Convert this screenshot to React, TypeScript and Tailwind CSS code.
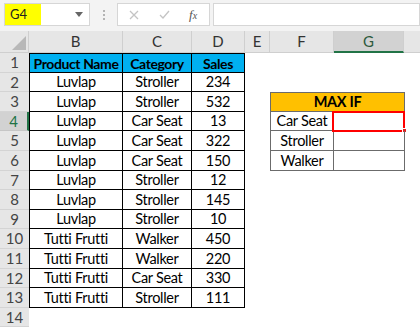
import React from "react";

const font = { fontFamily: "Lato, 'Liberation Sans', sans-serif" };

// sheet rows 1..13 (B, C, D)
const data = [
  ["Product Name", "Category", "Sales"],
  ["Luvlap", "Stroller", "234"],
  ["Luvlap", "Stroller", "532"],
  ["Luvlap", "Car Seat", "13"],
  ["Luvlap", "Car Seat", "322"],
  ["Luvlap", "Car Seat", "150"],
  ["Luvlap", "Stroller", "12"],
  ["Luvlap", "Stroller", "145"],
  ["Luvlap", "Stroller", "10"],
  ["Tutti Frutti", "Walker", "450"],
  ["Tutti Frutti", "Walker", "220"],
  ["Tutti Frutti", "Car Seat", "330"],
  ["Tutti Frutti", "Stroller", "111"],
];

const heights = [
  "h-[20px]", "h-[19px]", "h-[20px]", "h-[19px]", "h-[20px]", "h-[20px]", "h-[19px]",
  "h-[20px]", "h-[19px]", "h-[20px]", "h-[20px]", "h-[19px]", "h-[20px]", "h-[19px]",
];

const maxIf: Record<number, string> = { 4: "Car Seat", 5: "Stroller", 6: "Walker" };

const colHeads = [
  { k: "B", w: "w-[94px]" },
  { k: "C", w: "w-[69px]" },
  { k: "D", w: "w-[53px]" },
  { k: "E", w: "w-[25px]" },
  { k: "F", w: "w-[64px]" },
  { k: "G", w: "w-[70px]" },
];

const TopBar = () => (
  <div className="flex h-[31px] items-start gap-0 bg-[#f3f3f3] pt-[3px]">
    <div className="ml-[4px] flex h-[23px] w-[86px] items-center border border-[#d6d6d6] bg-white">
      <div className="flex h-full w-[36px] items-center bg-[#ffff00] pl-[5px] text-[13px] text-[#222]">G4</div>
      <div className="flex-1" />
      <svg width="8" height="5" viewBox="0 0 8 5" className="mr-[6px]">
        <path d="M0 0 L8 0 L4 5 Z" fill="#666" />
      </svg>
    </div>
    <div className="flex h-[23px] w-[27px] flex-col items-center justify-center gap-[2px]">
      <span className="h-[2px] w-[2px] bg-[#b4b4b4]" />
      <span className="h-[2px] w-[2px] bg-[#b4b4b4]" />
      <span className="h-[2px] w-[2px] bg-[#b4b4b4]" />
    </div>
    <div className="flex h-[23px] w-[93px] items-center border border-[#d6d6d6] bg-white">
      <svg width="10" height="10" viewBox="0 0 10 10" className="ml-[11px]">
        <path d="M1 1 L9 9 M9 1 L1 9" stroke="#c4c4c4" strokeWidth="1.3" />
      </svg>
      <svg width="11" height="9" viewBox="0 0 11 9" className="ml-[20px]">
        <path d="M1 5 L4 8 L10 1" stroke="#c4c4c4" strokeWidth="1.3" fill="none" />
      </svg>
      <span className="ml-[19px] text-[13px] italic text-[#555]" style={{ fontFamily: "'Liberation Serif', serif" }}>
        f<span className="text-[10px]">x</span>
      </span>
    </div>
    <div className="ml-[3px] h-[23px] flex-1 border border-[#d6d6d6] bg-white" />
  </div>
);

const ColumnHeader = () => (
  <div className="flex h-[22px] bg-[#e6e6e6] text-[15px] text-[#333]">
    <div className="relative w-[29px] border-r border-b border-[#cfcfcf]">
      <svg width="14" height="14" viewBox="0 0 14 14" className="absolute right-[2px] bottom-[2px]">
        <path d="M14 0 L14 14 L0 14 Z" fill="#b8b8b8" />
      </svg>
    </div>
    {colHeads.map((c) =>
      c.k === "G" ? (
        <div
          key={c.k}
          className={`${c.w} flex items-center justify-center border-r border-b-2 border-r-[#cfcfcf] border-b-[#217346] bg-[#d2d2d2] text-[#2d5a3d]`}
        >
          {c.k}
        </div>
      ) : (
        <div key={c.k} className={`${c.w} flex items-center justify-center border-r border-b border-[#cfcfcf]`}>
          {c.k}
        </div>
      )
    )}
    <div className="flex-1 border-b border-[#cfcfcf]" />
  </div>
);

const Row = ({ r }: { r: number }) => {
  const d = data[r - 1];
  const inTable = r <= 13;
  const base = "flex items-center justify-center whitespace-nowrap border-black";
  const tb = inTable ? `border-r border-b ${r === 1 ? "border-t" : ""}` : "";
  const head = r === 1 ? "bg-[#00b0f0] text-[14px] font-bold tracking-[-0.4px]" : "";
  const selected = r === 4;

  return (
    <div className={`flex ${heights[r - 1]} text-[14.5px] tracking-[-0.3px] text-black`}>
      <div
        className={`flex w-[29px] items-center justify-center border-b text-[15px] tracking-normal ${
          selected
            ? "border-r-2 border-b-[#c6c6c6] border-r-[#217346] bg-[#d2d2d2] text-[#217346]"
            : "border-[#d4d4d4] bg-[#e6e6e6] text-[#444]"
        }`}
      >
        {r}
      </div>
      <div className={`w-[94px] ${base} ${tb} ${inTable ? "border-l" : ""} ${head}`}>{d?.[0]}</div>
      <div className={`w-[69px] ${base} ${tb} ${head}`}>{d?.[1]}</div>
      <div className={`w-[53px] ${base} ${tb} ${head}`}>{d?.[2]}</div>
      <div className="w-[25px]" />
      {r === 3 ? (
        <div className="flex w-[135px] items-center justify-center border border-[#6b6b6b] bg-[#ffc000] font-bold">
          MAX IF
        </div>
      ) : maxIf[r] ? (
        <>
          <div className="flex w-[64px] items-center justify-center whitespace-nowrap border-x border-b border-[#6b6b6b]">
            {maxIf[r]}
          </div>
          <div className="relative w-[71px] border-r border-b border-[#6b6b6b]">
            {selected && (
              <>
                <div className="absolute -top-px -left-[2px] h-[21px] w-[73px] border-2 border-[#ff0000]" />
                <div className="absolute -right-[3px] -bottom-[3px] h-[5px] w-[5px] border border-white bg-[#e02020]" />
              </>
            )}
          </div>
        </>
      ) : (
        <div className="w-[135px]" />
      )}
      <div className="flex-1" />
    </div>
  );
};

export default function App() {
  return (
    <div className="h-[327px] w-[420px] overflow-hidden bg-white" style={font}>
      <TopBar />
      <ColumnHeader />
      {heights.map((_, i) => (
        <Row key={i} r={i + 1} />
      ))}
    </div>
  );
}
